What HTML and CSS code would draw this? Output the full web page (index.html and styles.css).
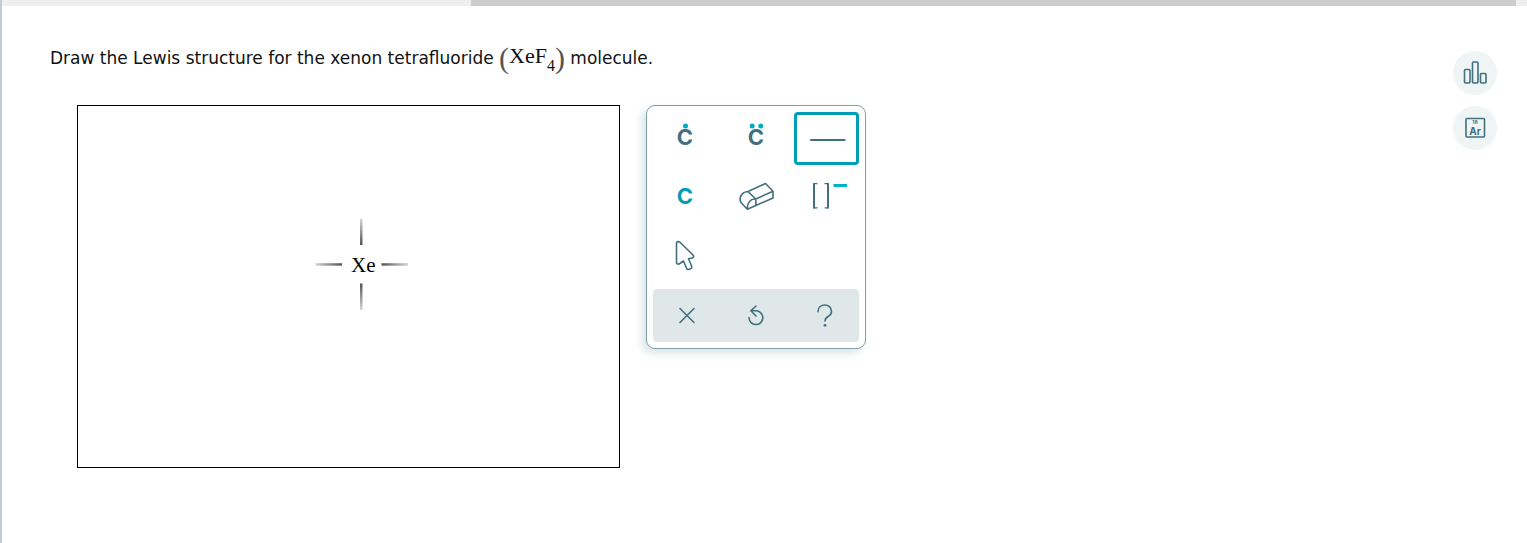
FILE: index.html
```html
<!DOCTYPE html>
<html lang="en">
<head>
  <meta charset="UTF-8">
  <meta name="viewport" content="width=device-width, initial-scale=1.0">
  <title>Lewis Structure</title>
  <link rel="stylesheet" href="styles.css">
</head>
<body>
  <!-- Progress strip -->
  <div class="progress"><div class="progress-bar"></div></div>

  <div class="page">
    <main class="question">
      <p class="prompt">Draw the Lewis structure for the xenon tetrafluoride <span class="formula"><span class="paren">(</span>XeF<sub>4</sub><span class="paren">)</span></span> molecule.</p>

      <div class="workspace">
        <!-- Drawing area -->
        <div class="canvas">
          <svg class="molecule" viewBox="0 0 94 94" role="img" aria-label="Xe with four bonds">
            <defs>
              <linearGradient id="up" x1="0" y1="0" x2="0" y2="1"><stop offset="0" stop-color="#d4d4d4"/><stop offset="1" stop-color="#555"/></linearGradient>
              <linearGradient id="down" x1="0" y1="1" x2="0" y2="0"><stop offset="0" stop-color="#d4d4d4"/><stop offset="1" stop-color="#555"/></linearGradient>
              <linearGradient id="left"><stop offset="0" stop-color="#d4d4d4"/><stop offset="1" stop-color="#555"/></linearGradient>
              <linearGradient id="right"><stop offset="0" stop-color="#555"/><stop offset="1" stop-color="#d4d4d4"/></linearGradient>
            </defs>
            <rect x="45" y="1" width="2.5" height="26" fill="url(#up)"/>
            <rect x="45" y="65.5" width="2.5" height="26.5" fill="url(#down)"/>
            <rect x="0.5" y="45.2" width="26.5" height="2.5" fill="url(#left)"/>
            <rect x="66.5" y="45.2" width="26.5" height="2.5" fill="url(#right)"/>
            <text class="atom" x="36" y="54">Xe</text>
          </svg>
        </div>

        <!-- Tool palette -->
        <div class="palette">
          <div class="tools">
            <button type="button" aria-label="Single electron">
              <svg class="icon" viewBox="0 0 40 40"><text class="letter" x="20" y="26">C</text><circle class="dot" cx="20.5" cy="7" r="2.5"/></svg>
            </button>
            <button type="button" aria-label="Lone pair">
              <svg class="icon" viewBox="0 0 40 40"><text class="letter" x="20" y="26">C</text><circle class="dot" cx="16.2" cy="7" r="2.5"/><circle class="dot" cx="24.8" cy="7" r="2.5"/></svg>
            </button>
            <button type="button" class="selected" aria-label="Bond">
              <svg class="icon" viewBox="0 0 40 40"><path d="M4 21H37.5" stroke-width="2.2"/></svg>
            </button>
            <button type="button" aria-label="Atom">
              <svg class="icon" viewBox="0 0 40 40"><text class="letter teal" x="20" y="26">C</text></svg>
            </button>
            <button type="button" aria-label="Eraser">
              <svg class="icon" viewBox="0 0 40 40"><path d="M12 13.5 29.5 5.5 37 13.3V20L11.3 31.3 5 24.5C2.5 20 5.5 14 12 13.5L19.7 21 37 13.3M19.7 21 20 27.3M19.7 21C14.5 20.5 11 24.5 11.3 31.3"/></svg>
            </button>
            <button type="button" aria-label="Charge">
              <svg class="icon wide" viewBox="0 0 44 40"><path d="M9 5V30.500M23 5V30.500" stroke-width="2" stroke-linecap="butt"/><path d="M9 5.7H12M9 29.8H12M23 5.7H20M23 29.8H20" stroke-width="1.2"/><path class="minus" d="M28.5 7.500H42"/></svg>
            </button>
            <button type="button" aria-label="Select">
              <svg class="icon" viewBox="0 0 40 40"><path d="M11.5 6.500Q11.5 4.500 13.500 4.500L15 5.300 28 18Q29.500 20.500 27 21L23.500 21.800 26.800 29.500Q27 31.200 25.500 31.700L23.500 32.500Q22 32.800 21.500 31.200L18.500 24 14 27Q11.500 27.500 11.500 25Z"/></svg>
            </button>
          </div>
          <div class="actions">
            <button type="button" aria-label="Clear">
              <svg class="icon" viewBox="0 0 40 40"><path d="M13 12.5 27 26.5M27 12.5 13 26.5"/></svg>
            </button>
            <button type="button" aria-label="Undo">
              <svg class="icon" viewBox="0 0 40 40"><path d="M20 10 14.8 14.8 20 20M15 14.8H20.5A6.9 6.9 0 1 1 13 21.5"/></svg>
            </button>
            <button type="button" aria-label="Help">
              <svg class="icon" viewBox="0 0 40 40"><path d="M13 15.7C13 6.8 26.5 6.8 26.5 15.5 26.5 21.5 20 19.5 20 25"/><circle cx="20" cy="29.3" r="1.4" fill="#41707f" stroke="none"/></svg>
            </button>
          </div>
        </div>
      </div>
    </main>

    <!-- Reference tools -->
    <aside class="side">
      <button type="button" aria-label="Chart">
        <svg class="icon" viewBox="0 0 44 44"><rect x="11.5" y="18.5" width="5.5" height="13.5" rx="1"/><rect x="19.5" y="11" width="5.5" height="21" rx="1"/><rect x="27.5" y="22.5" width="5.5" height="9.5" rx="1"/></svg>
      </button>
      <button type="button" aria-label="Periodic table">
        <svg class="icon" viewBox="0 0 44 44"><rect x="13" y="12.5" width="18.5" height="18.5" rx="1"/><text class="number" x="22" y="17.5">18</text><text class="symbol" x="22" y="28.5">Ar</text></svg>
      </button>
    </aside>
  </div>
</body>
</html>
```

FILE: styles.css
```css
* {
  margin: 0;
  padding: 0;
  box-sizing: border-box;
}

body {
  min-height: 100vh;
  border-left: 2px solid #c0cdd8;
  background: #fff;
  color: #111;
  font-family: Verdana, "DejaVu Sans", sans-serif;
}

button {
  display: flex;
  align-items: center;
  justify-content: center;
  border: none;
  background: none;
  cursor: pointer;
}

/* Progress strip */
.progress {
  height: 6px;
  padding: 0 11px 0 0;
  background: #efefef;
}

.progress-bar {
  width: 69%;
  height: 100%;
  margin-left: auto;
  background: #cdcdcd;
}

.page {
  display: flex;
  justify-content: space-between;
  padding: 34px 30px 0 48px;
}

/* Question text */
.prompt {
  height: 40px;
  font-size: 17px;
  line-height: 36px;
}

.formula {
  font-family: "Liberation Serif", serif;
  font-size: 22px;
  line-height: 22px;
  vertical-align: 1px;
}

.formula sub {
  font-size: 16px;
  line-height: 16px;
  vertical-align: -8px;
}

.paren {
  font-size: 30px;
  line-height: 30px;
  vertical-align: -5px;
  color: #555;
}

.workspace {
  display: flex;
  align-items: flex-start;
  gap: 26px;
  margin: 25px 0 0 27px;
}

/* Drawing area */
.canvas {
  position: relative;
  width: 543px;
  height: 363px;
  border: 1px solid #000;
}

.molecule {
  position: absolute;
  left: 237px;
  top: 112px;
  width: 94px;
  height: 94px;
}

.atom {
  font-family: "Liberation Serif", serif;
  font-size: 21px;
}

/* Tool palette */
.palette {
  width: 220px;
  padding: 6px;
  border: 1px solid #7da0aa;
  border-radius: 9px;
  background: #fff;
  box-shadow: -4px 4px 8px #dae3e6;
}

.tools {
  display: grid;
  grid-template-columns: repeat(3, 1fr);
  grid-auto-rows: 53px;
  gap: 6px;
}

.tools .selected {
  border: 3px solid #009db8;
  border-radius: 4px;
}

.actions {
  display: flex;
  height: 53px;
  margin-top: 6px;
  border-radius: 4px;
  background: #dfe7e9;
}

.actions button {
  flex: 1;
}

.icon {
  flex: none;
  width: 40px;
  height: 40px;
  fill: none;
  stroke: #41707f;
  stroke-width: 1.6;
  stroke-linecap: round;
  stroke-linejoin: round;
}

.icon.wide {
  width: 44px;
}

.icon text {
  fill: #41707f;
  stroke: none;
  text-anchor: middle;
}

.icon .letter {
  font: bold 22px Inter, sans-serif;
}

.icon .teal {
  fill: #009db8;
}

.icon .dot {
  fill: #00aac4;
  stroke: none;
}

.icon .minus {
  stroke: #00b0cc;
  stroke-width: 3;
  stroke-linecap: butt;
}

/* Reference tools */
.side {
  display: flex;
  flex-direction: column;
  gap: 11px;
  padding-top: 11px;
}

.side button {
  width: 44px;
  height: 44px;
  border-radius: 50%;
  background: #eff4f5;
}

.side .icon {
  width: 44px;
  height: 44px;
}

.side .number {
  font: bold 5px Inter, sans-serif;
}

.side .symbol {
  font: bold 10px Inter, sans-serif;
}
```
